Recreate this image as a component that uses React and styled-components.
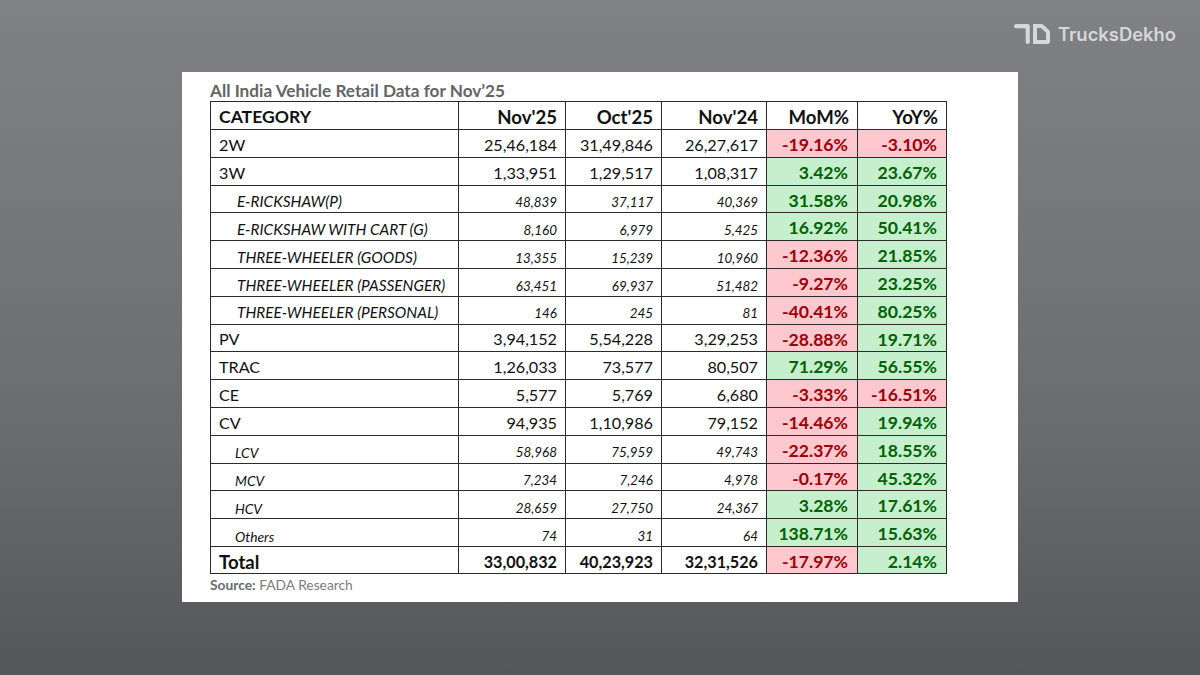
import styled, { createGlobalStyle } from "styled-components";

const rows = [
  { kind: "main", name: "2W", a: "25,46,184", b: "31,49,846", c: "26,27,617", mom: "-19.16%", yoy: "-3.10%" },
  { kind: "main", name: "3W", a: "1,33,951", b: "1,29,517", c: "1,08,317", mom: "3.42%", yoy: "23.67%" },
  { kind: "sub", name: "E-RICKSHAW(P)", a: "48,839", b: "37,117", c: "40,369", mom: "31.58%", yoy: "20.98%" },
  { kind: "sub", name: "E-RICKSHAW WITH CART (G)", a: "8,160", b: "6,979", c: "5,425", mom: "16.92%", yoy: "50.41%" },
  { kind: "sub", name: "THREE-WHEELER (GOODS)", a: "13,355", b: "15,239", c: "10,960", mom: "-12.36%", yoy: "21.85%" },
  { kind: "sub", name: "THREE-WHEELER (PASSENGER)", a: "63,451", b: "69,937", c: "51,482", mom: "-9.27%", yoy: "23.25%" },
  { kind: "sub", name: "THREE-WHEELER (PERSONAL)", a: "146", b: "245", c: "81", mom: "-40.41%", yoy: "80.25%" },
  { kind: "main", name: "PV", a: "3,94,152", b: "5,54,228", c: "3,29,253", mom: "-28.88%", yoy: "19.71%" },
  { kind: "main", name: "TRAC", a: "1,26,033", b: "73,577", c: "80,507", mom: "71.29%", yoy: "56.55%" },
  { kind: "main", name: "CE", a: "5,577", b: "5,769", c: "6,680", mom: "-3.33%", yoy: "-16.51%" },
  { kind: "main", name: "CV", a: "94,935", b: "1,10,986", c: "79,152", mom: "-14.46%", yoy: "19.94%" },
  { kind: "cv", name: "LCV", a: "58,968", b: "75,959", c: "49,743", mom: "-22.37%", yoy: "18.55%" },
  { kind: "cv", name: "MCV", a: "7,234", b: "7,246", c: "4,978", mom: "-0.17%", yoy: "45.32%" },
  { kind: "cv", name: "HCV", a: "28,659", b: "27,750", c: "24,367", mom: "3.28%", yoy: "17.61%" },
  { kind: "cv", name: "Others", a: "74", b: "31", c: "64", mom: "138.71%", yoy: "15.63%" },
];

const GlobalStyle = createGlobalStyle`
  html, body {
    margin: 0;
    padding: 0;
  }
  body {
    font-family: "Lato", "Liberation Sans", sans-serif;
  }
`;

const Page = styled.div`
  width: 1200px;
  height: 675px;
  overflow: hidden;
  background: linear-gradient(180deg, #808184 0%, #77787b 30%, #6a6b6e 65%, #55565a 100%);
  display: flex;
  flex-direction: column;
`;

const Header = styled.header`
  height: 72px;
  flex: none;
  display: flex;
  justify-content: flex-end;
  align-items: flex-start;
  padding: 23px 24px 0 0;
  box-sizing: border-box;
`;

const Brand = styled.div`
  display: flex;
  align-items: center;
  gap: 7px;
  color: #d6d7d8;
`;

const BrandName = styled.span`
  font-family: "Inter", sans-serif;
  font-size: 18.4px;
  font-weight: 600;
  line-height: 22px;
`;

const Sheet = styled.main`
  width: 836px;
  height: 530px;
  margin: 0 auto;
  background: #fff;
  box-sizing: border-box;
  padding: 8px 72px 0 28px;
`;

const Title = styled.h2`
  margin: 0;
  font-size: 17.2px;
  line-height: 21px;
  font-weight: 700;
  color: #636466;
`;

const Table = styled.table`
  width: 736px;
  border-collapse: collapse;
  table-layout: fixed;
  color: #111;
`;

const Row = styled.tr`
  height: ${(p) => p.$h}px;
`;

const sizes = {
  body: { font: "16.2px", top: "3px" },
  small: { font: "13.4px", top: "8px", italic: true },
  cvname: { font: "13.8px", top: "8px", italic: true },
  label: { font: "15.4px", top: "6px", italic: true },
  category: { font: "17.6px", top: "3px" },
  head: { font: "18.6px", top: "3px" },
  total: { font: "18.6px", top: "5px" },
  totalnum: { font: "16.2px", top: "5px" },
};

const Cell = styled.td`
  border: 1px solid #2b2b2b;
  padding: ${(p) => sizes[p.$size].top} 8px 0 0;
  text-align: right;
  white-space: nowrap;
  font-size: ${(p) => sizes[p.$size].font};
  font-style: ${(p) => (sizes[p.$size].italic ? "italic" : "normal")};
  font-weight: ${(p) => (p.$bold ? 700 : 400)};
  line-height: 1;
`;

const NameCell = styled(Cell)`
  text-align: left;
  padding-left: ${(p) => p.$indent}px;
  padding-right: 0;
`;

const ChangeCell = styled.td`
  border: 1px solid #2b2b2b;
  padding: 3px 9px 0 0;
  text-align: right;
  font-size: 17.6px;
  font-weight: 700;
  line-height: 1;
  background: ${(p) => (p.$down ? "#ffc7ce" : "#c6efce")};
  color: ${(p) => (p.$down ? "#9c0006" : "#006100")};
`;

const Source = styled.p`
  margin: 3px 0 0;
  font-size: 13.8px;
  line-height: 16px;
  color: #7b7c7e;
`;

const SourceLabel = styled.b`
  color: #6a6b6d;
`;

const LogoMark = () => (
  <svg width="38" height="22" viewBox="0 0 38 22" fill="none" aria-hidden="true">
    <path d="M1 3.2C1 2 1.9 1 3.2 1H14.5C15.8 1 16.8 2 16.8 3.3V19C16.8 20.2 15.9 21 14.8 21C13.6 21 12.7 20.2 12.7 19V6.8C12.7 5.8 12 5.2 11 5.2H3.2C1.9 5.2 1 4.3 1 3.2Z" fill="#d6d7d8" />
    <path d="M20 1H28.5C29.2 1 29.8 1.2 30.3 1.7L36.2 7.2C36.8 7.8 37 8.4 37 9.1V18.8C37 20 36 21 34.8 21H20Z M24 5V17H33V9.5L28 5Z" fill="#d6d7d8" fillRule="evenodd" />
  </svg>
);

const App = () => (
  <>
    <GlobalStyle />
    <Page>
      <Header>
        <Brand>
          <LogoMark />
          <BrandName>TrucksDekho</BrandName>
        </Brand>
      </Header>
      <Sheet>
        <Title>All India Vehicle Retail Data for Nov’25</Title>
        <Table>
          <colgroup>
            <col style={{ width: 248 }} />
            <col style={{ width: 107 }} />
            <col style={{ width: 96 }} />
            <col style={{ width: 105 }} />
            <col style={{ width: 91 }} />
            <col style={{ width: 89 }} />
          </colgroup>
          <thead>
            <Row $h={28}>
              <NameCell as="th" $indent={8} $size="category" $bold>CATEGORY</NameCell>
              <Cell as="th" $size="head" $bold>Nov'25</Cell>
              <Cell as="th" $size="head" $bold>Oct'25</Cell>
              <Cell as="th" $size="head" $bold>Nov'24</Cell>
              <Cell as="th" $size="head" $bold>MoM%</Cell>
              <Cell as="th" $size="head" $bold>YoY%</Cell>
            </Row>
          </thead>
          <tbody>
            {rows.map((r) => {
              const numSize = r.kind === "main" ? "body" : "small";
              const nameSize = r.kind === "main" ? "body" : r.kind === "sub" ? "label" : "cvname";
              const indent = r.kind === "sub" ? 26 : r.kind === "cv" ? 24 : 8;
              return (
                <Row key={r.name} $h={27.8}>
                  <NameCell $indent={indent} $size={nameSize}>{r.name}</NameCell>
                  <Cell $size={numSize}>{r.a}</Cell>
                  <Cell $size={numSize}>{r.b}</Cell>
                  <Cell $size={numSize}>{r.c}</Cell>
                  <ChangeCell $down={r.mom.startsWith("-")}>{r.mom}</ChangeCell>
                  <ChangeCell $down={r.yoy.startsWith("-")}>{r.yoy}</ChangeCell>
                </Row>
              );
            })}
            <Row $h={27}>
              <NameCell $indent={8} $size="total" $bold>Total</NameCell>
              <Cell $size="totalnum" $bold>33,00,832</Cell>
              <Cell $size="totalnum" $bold>40,23,923</Cell>
              <Cell $size="totalnum" $bold>32,31,526</Cell>
              <ChangeCell $down>-17.97%</ChangeCell>
              <ChangeCell>2.14%</ChangeCell>
            </Row>
          </tbody>
        </Table>
        <Source>
          <SourceLabel>Source:</SourceLabel> FADA Research
        </Source>
      </Sheet>
    </Page>
  </>
);

export default App;
